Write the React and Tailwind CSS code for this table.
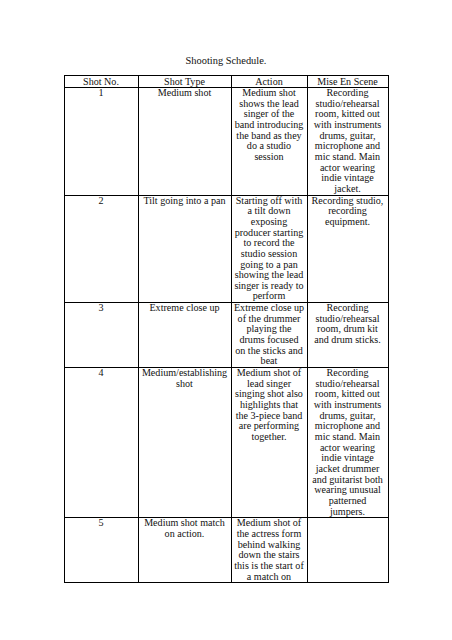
const rows = [
  {
    no: '1',
    type: ['Medium shot'],
    action: ['Medium shot', 'shows the lead', 'singer of the', 'band introducing', 'the band as they', 'do a studio', 'session'],
    mise: ['Recording', 'studio/rehearsal', 'room, kitted out', 'with instruments', 'drums, guitar,', 'microphone and', 'mic stand. Main', 'actor wearing', 'indie vintage', 'jacket.'],
  },
  {
    no: '2',
    type: ['Tilt going into a pan'],
    action: ['Starting off with', 'a tilt down', 'exposing', 'producer starting', 'to record the', 'studio session', 'going to a pan', 'showing the lead', 'singer is ready to', 'perform'],
    mise: ['Recording studio,', 'recording', 'equipment.'],
  },
  {
    no: '3',
    type: ['Extreme close up'],
    action: ['Extreme close up', 'of the drummer', 'playing the', 'drums focused', 'on the sticks and', 'beat'],
    mise: ['Recording', 'studio/rehearsal', 'room, drum kit', 'and drum sticks.'],
  },
  {
    no: '4',
    type: ['Medium/establishing', 'shot'],
    action: ['Medium shot of', 'lead singer', 'singing shot also', 'highlights that', 'the 3-piece band', 'are performing', 'together.'],
    mise: ['Recording', 'studio/rehearsal', 'room, kitted out', 'with instruments', 'drums, guitar,', 'microphone and', 'mic stand. Main', 'actor wearing', 'indie vintage', 'jacket drummer', 'and guitarist both', 'wearing unusual', 'patterned', 'jumpers.'],
  },
  {
    no: '5',
    type: ['Medium shot match', 'on action.'],
    action: ['Medium shot of', 'the actress form', 'behind walking', 'down the stairs', 'this is the start of', 'a match on'],
    mise: [],
  },
];

function Lines({ lines }) {
  return lines.map((l, i) => (
    <span key={i} className="block whitespace-nowrap">
      {l}
    </span>
  ));
}

export default function App() {
  const cell = 'border border-black align-top text-center px-[2px] py-0';
  return (
    <div
      className="bg-white w-[452px] h-[640px] text-[#111] text-[10.1px]"
      style={{ fontFamily: '"Liberation Serif", "Times New Roman", serif' }}
    >
      <div className="pt-[54px] text-center leading-[13px] text-[10.4px]">Shooting Schedule.</div>
      <table className="mx-auto mt-[8px] border-collapse table-fixed w-[324px]">
        <colgroup>
          <col className="w-[74px]" />
          <col className="w-[93px]" />
          <col className="w-[76px]" />
          <col className="w-[81px]" />
        </colgroup>
        <thead>
          <tr className="leading-[11px]">
            <th className={cell + ' font-normal'}>Shot No.</th>
            <th className={cell + ' font-normal'}>Shot Type</th>
            <th className={cell + ' font-normal'}>Action</th>
            <th className={cell + ' font-normal'}>Mise En Scene</th>
          </tr>
        </thead>
        <tbody className="leading-[10.65px]">
          {rows.map((r) => (
            <tr key={r.no}>
              <td className={cell}>{r.no}</td>
              <td className={cell}>
                <Lines lines={r.type} />
              </td>
              <td className={cell}>
                <Lines lines={r.action} />
              </td>
              <td className={cell}>
                <Lines lines={r.mise} />
              </td>
            </tr>
          ))}
        </tbody>
      </table>
    </div>
  );
}
